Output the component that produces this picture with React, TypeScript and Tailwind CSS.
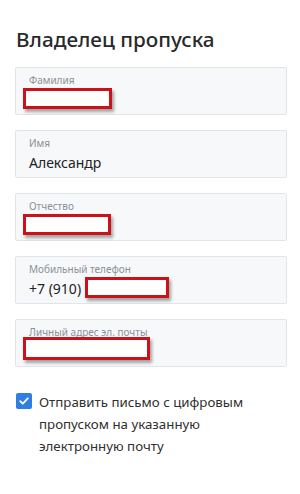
import React from "react";

function Redact({ className }: { className: string }) {
  return (
    <div
      className={`absolute border-[3px] border-[#cc1119] bg-white shadow-[2px_3px_3px_rgba(0,0,0,0.35)] ${className}`}
    />
  );
}

function Field({
  label,
  value,
  children,
}: {
  label: string;
  value?: string;
  children?: React.ReactNode;
}) {
  return (
    <div className="relative h-[48px] rounded-[2px] border border-[#e1e4e8] bg-[#f7f8fa] pl-[13px] pt-[5px]">
      <div className="text-[10px] leading-[14px] text-[#8c9198]">{label}</div>
      <div className="mt-[3px] h-[20px] text-[14px] leading-[20px] text-[#222]">{value}</div>
      {children}
    </div>
  );
}

export default function App() {
  return (
    <div
      className="h-[494px] w-[300px] bg-white pl-[15px] pr-[13px]"
      style={{ fontFamily: '"Noto Sans", "Open Sans", sans-serif' }}
    >
      <h1 className="pl-[1px] pt-[25px] text-[20.7px] font-medium leading-[28px] text-[#2a2a2a]">
        Владелец пропуска
      </h1>
      <div className="mt-[14px] flex flex-col gap-[15px]">
        <Field label="Фамилия">
          <Redact className="left-[7px] top-[20px] h-[21px] w-[89px]" />
        </Field>
        <Field label="Имя" value="Александр" />
        <Field label="Отчество">
          <Redact className="left-[7px] top-[20px] h-[21px] w-[88px]" />
        </Field>
        <Field label="Мобильный телефон" value="+7 (910)">
          <Redact className="left-[69px] top-[20px] h-[21px] w-[84px]" />
        </Field>
        <Field label="Личный адрес эл. почты">
          <Redact className="left-[7px] top-[17px] h-[23px] w-[127px]" />
        </Field>
      </div>
      <div className="mt-[24px] flex items-start gap-[7px] pl-[1px]">
        <div className="mt-[2px] flex h-[16px] w-[16px] shrink-0 items-center justify-center rounded-[2px] bg-[#2f7fe3]">
          <svg width="12" height="12" viewBox="0 0 12 12" fill="none">
            <path d="M2.2 6.2 L4.8 8.7 L9.8 3.4" stroke="white" strokeWidth="1.8" strokeLinecap="round" strokeLinejoin="round" />
          </svg>
        </div>
        <div className="text-[13.3px] leading-[22px] text-[#2f2f2f]">
          Отправить письмо с цифровым
          <br />
          пропуском на указанную
          <br />
          электронную почту
        </div>
      </div>
    </div>
  );
}
